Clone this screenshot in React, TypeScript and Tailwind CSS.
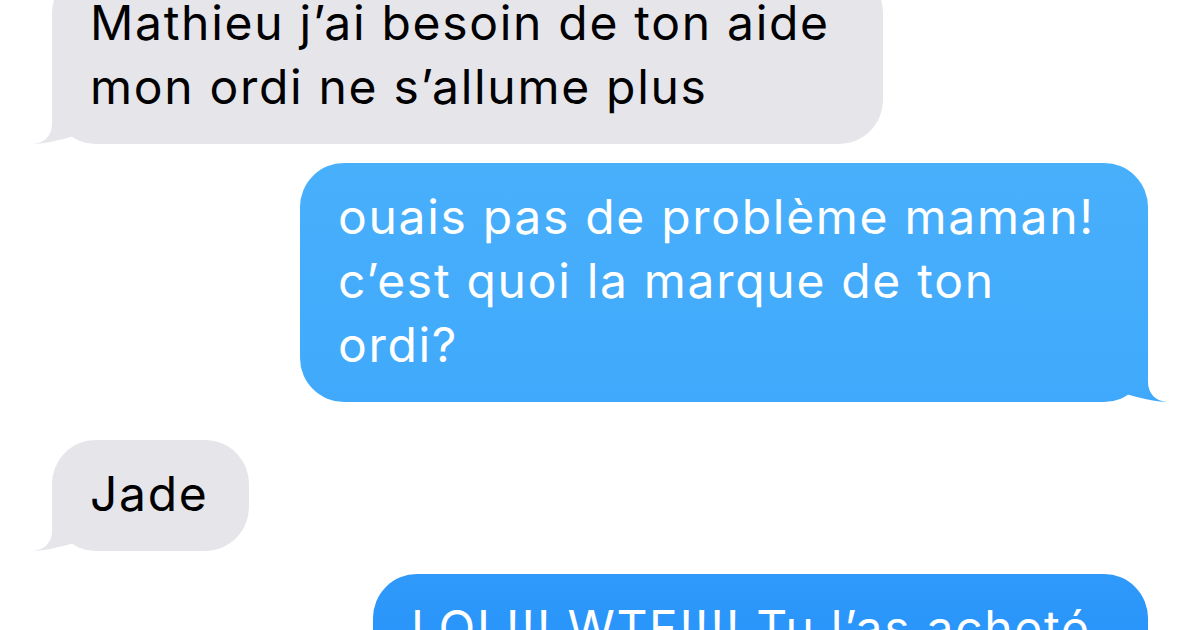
import React from 'react';

type Side = 'left' | 'right';

interface Message {
  side: Side;
  lines: string[];
  width?: string;
  spacing: string;
}

const MESSAGES: Message[] = [
  {
    side: 'left',
    lines: ['Mathieu j’ai besoin de ton aide', 'mon ordi ne s’allume plus'],
    width: 'w-[831px]',
    spacing: '-mt-[31px]',
  },
  {
    side: 'right',
    lines: ['ouais pas de problème maman!', 'c’est quoi la marque de ton', 'ordi?'],
    width: 'w-[848px]',
    spacing: 'mt-[19px]',
  },
  {
    side: 'left',
    lines: ['Jade'],
    spacing: 'mt-[38px]',
  },
  {
    side: 'right',
    lines: ['LOL!!! WTF!!!! Tu l’as acheté'],
    width: 'w-[775px]',
    spacing: 'mt-[23px]',
  },
];

// gray bubbles are flat, blue ones share one gradient fixed to the screen
const GRAY = 'bg-[#e5e5ea] text-black';
const BLUE = 'bg-fixed bg-linear-to-b from-[#4db3fb] via-[#41aafb] via-60% to-[#2a95fa] text-white';

function Tail({ side }: { side: Side }) {
  if (side === 'left') {
    return (
      <div
        className={`absolute -left-[20px] bottom-0 w-[60px] h-[50px] ${GRAY} [clip-path:path('M20_6L20_30C20_42_12_49_1_50C12_50_28_46_42_42L50_20L40_6Z')]`}
      />
    );
  }
  return (
    <div
      className={`absolute -right-[20px] bottom-0 w-[60px] h-[50px] ${BLUE} [clip-path:path('M40_6L40_30C40_42_48_49_59_50C48_50_32_46_18_42L10_20L20_6Z')]`}
    />
  );
}

function Bubble({ msg }: { msg: Message }) {
  const colors = msg.side === 'left' ? GRAY : BLUE;
  return (
    <div className={`flex ${msg.side === 'left' ? 'justify-start' : 'justify-end'} ${msg.spacing}`}>
      <div className={`relative ${msg.width ?? ''}`}>
        <Tail side={msg.side} />
        <div className={`relative rounded-[44px] pl-[38px] pr-[40px] pt-[22px] pb-[25px] ${colors}`}>
          {msg.lines.map((line) => (
            <p key={line} className="whitespace-nowrap">
              {line}
            </p>
          ))}
        </div>
      </div>
    </div>
  );
}

export default function App() {
  return (
    <div className="w-[1200px] h-[630px] overflow-hidden bg-white px-[52px] font-['Inter','Liberation_Sans',sans-serif] text-[48px] leading-[64px] tracking-[1.7px]">
      <div className="flex flex-col">
        {MESSAGES.map((msg, i) => (
          <Bubble key={i} msg={msg} />
        ))}
      </div>
    </div>
  );
}
